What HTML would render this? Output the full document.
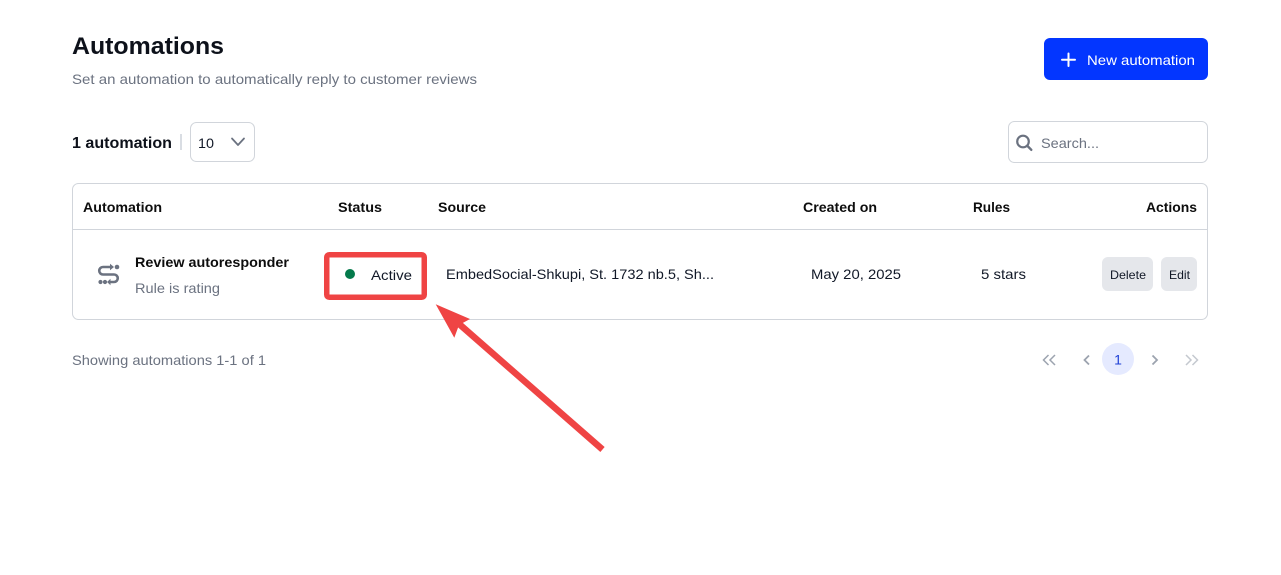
<!DOCTYPE html>
<html lang="en">
<head>
<meta charset="utf-8">
<title>Automations</title>
<style>
html,body{margin:0;padding:0;background:#fff;width:1281px;height:575px;overflow:hidden}
svg{display:block}
text{font-family:"Liberation Sans",sans-serif;font-size:14px;fill:#111827}
.g{fill:#6b7280}
.b{font-weight:700;fill:#0d111a}
.h{font-weight:700;fill:#0d0d0d}
</style>
</head>
<body>
<svg width="1281" height="575" viewBox="0 0 1281 575" xmlns="http://www.w3.org/2000/svg">
<rect width="1281" height="575" fill="#fff"/>

<!-- Header -->
<text x="72" y="54" class="b" style="font-size:24px" textLength="152" lengthAdjust="spacingAndGlyphs">Automations</text>
<text x="72" y="84" class="g" textLength="405" lengthAdjust="spacingAndGlyphs">Set an automation to automatically reply to customer reviews</text>

<rect x="1044" y="38" width="164" height="42" rx="6" fill="#0336ff"/>
<path d="M1068.500 53.500v12.500M1062 59.750h13" stroke="#fff" stroke-width="2" stroke-linecap="round" fill="none"/>
<text x="1087" y="65" style="fill:#fff" textLength="108" lengthAdjust="spacingAndGlyphs">New automation</text>

<!-- Toolbar -->
<text x="72" y="148" class="b" style="font-size:16px" textLength="100" lengthAdjust="spacingAndGlyphs">1 automation</text>
<rect x="180" y="134" width="2" height="16" fill="#d9dde3"/>
<rect x="190.500" y="122.500" width="64" height="39" rx="6" fill="#fff" stroke="#d1d5db"/>
<text x="198" y="148" textLength="16" lengthAdjust="spacingAndGlyphs">10</text>
<path d="M232 138.500l6 6.500 6-6.500" stroke="#6b7280" stroke-width="1.800" fill="none" stroke-linecap="round" stroke-linejoin="round"/>

<rect x="1008.500" y="121.500" width="199" height="41" rx="6" fill="#fff" stroke="#d1d5db"/>
<circle cx="1023" cy="141.500" r="5.800" fill="none" stroke="#6b7280" stroke-width="2.200"/>
<path d="M1027.500 146l3.800 3.800" stroke="#6b7280" stroke-width="2.400" stroke-linecap="round"/>
<text x="1041" y="148" class="g" textLength="58" lengthAdjust="spacingAndGlyphs">Search...</text>

<!-- Table -->
<rect x="72.500" y="183.500" width="1135" height="136" rx="6" fill="#fff" stroke="#d1d5db"/>
<path d="M73 229.500H1207" stroke="#d1d5db"/>
<text x="83" y="212" class="h" textLength="79" lengthAdjust="spacingAndGlyphs">Automation</text>
<text x="338" y="212" class="h" textLength="44" lengthAdjust="spacingAndGlyphs">Status</text>
<text x="438" y="212" class="h" textLength="48" lengthAdjust="spacingAndGlyphs">Source</text>
<text x="803" y="212" class="h" textLength="74" lengthAdjust="spacingAndGlyphs">Created on</text>
<text x="973" y="212" class="h" textLength="37" lengthAdjust="spacingAndGlyphs">Rules</text>
<text x="1146" y="212" class="h" textLength="51" lengthAdjust="spacingAndGlyphs">Actions</text>

<!-- Row icon -->
<path d="M111 267h-8a3.750 3.750 0 0 0 0 7.500h11a3.750 3.750 0 0 1 0 7.500h-5" fill="none" stroke="#6b7280" stroke-width="2.600"/>
<path d="M110 263.700l4 3.300-4 3.300z" fill="#6b7280"/>
<circle cx="117" cy="267" r="2.300" fill="#6b7280"/>
<circle cx="100.500" cy="282" r="2.100" fill="#6b7280"/>
<circle cx="105" cy="282" r="2.100" fill="#6b7280"/>
<path d="M110.500 278.700l-3.500 3.300 3.500 3.300z" fill="#6b7280"/>

<text x="135" y="267" class="h" textLength="154" lengthAdjust="spacingAndGlyphs">Review autoresponder</text>
<text x="135" y="293" class="g" textLength="85" lengthAdjust="spacingAndGlyphs">Rule is rating</text>

<!-- Status highlight -->
<rect x="326.750" y="254.750" width="97.500" height="42.500" rx="2.500" fill="#fff" stroke="#ef4444" stroke-width="5.500"/>
<circle cx="350" cy="274" r="5" fill="#047a4b"/>
<text x="371" y="280" textLength="41" lengthAdjust="spacingAndGlyphs">Active</text>

<text x="446" y="279" textLength="268" lengthAdjust="spacingAndGlyphs">EmbedSocial-Shkupi, St. 1732 nb.5, Sh...</text>
<text x="811" y="279" textLength="90" lengthAdjust="spacingAndGlyphs">May 20, 2025</text>
<text x="981" y="279" textLength="45" lengthAdjust="spacingAndGlyphs">5 stars</text>

<rect x="1102" y="257" width="51" height="34" rx="6" fill="#e5e7eb"/>
<text x="1110" y="279" style="font-size:12px" textLength="36" lengthAdjust="spacingAndGlyphs">Delete</text>
<rect x="1161" y="257" width="36" height="34" rx="6" fill="#e5e7eb"/>
<text x="1169" y="279" style="font-size:12px" textLength="21" lengthAdjust="spacingAndGlyphs">Edit</text>

<!-- Footer -->
<text x="72" y="365" class="g" textLength="194" lengthAdjust="spacingAndGlyphs">Showing automations 1-1 of 1</text>
<path d="M1048.500 355l-5 5 5 5M1055 355l-5 5 5 5" fill="none" stroke="#9ca3af" stroke-width="1.500"/>
<path d="M1089 355.500l-4.500 4.500 4.500 4.500" fill="none" stroke="#9ca3af" stroke-width="1.800"/>
<circle cx="1118" cy="359" r="16" fill="#e5eaff"/>
<text x="1118" y="364.500" text-anchor="middle" style="fill:#1d3fd6">1</text>
<path d="M1152.500 355.500l4.500 4.500-4.500 4.500" fill="none" stroke="#9ca3af" stroke-width="1.800"/>
<path d="M1186 355l5 5-5 5M1192.500 355l5 5-5 5" fill="none" stroke="#c4c8cf" stroke-width="1.500"/>

<!-- Arrow -->
<path d="M602.500 449.500L458 323" stroke="#ef4444" stroke-width="6.500" fill="none"/>
<path d="M435.700 304.300L470 319L459 325L454.300 337.700Z" fill="#ef4444"/>
</svg>
</body>
</html>
